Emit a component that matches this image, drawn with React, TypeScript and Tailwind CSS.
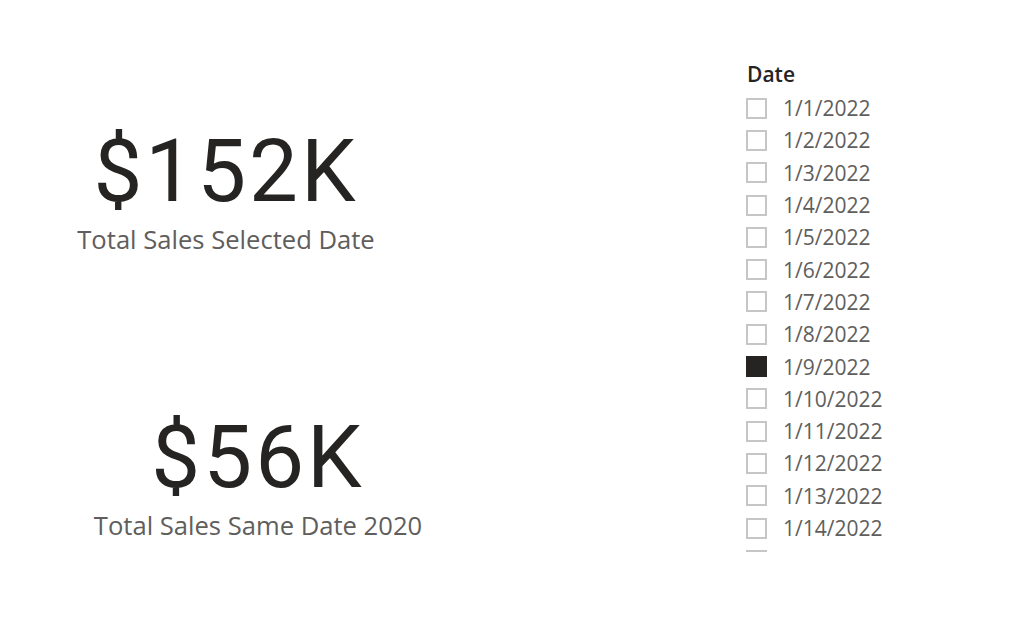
import React from "react";

const dates = Array.from({ length: 15 }, (_, i) => `1/${i + 1}/2022`);

function Card({ value, label, className }: { value: string; label: string; className: string }) {
  return (
    <div className={`flex flex-col items-center ${className}`}>
      <div
        className="text-[87px] leading-[87px] text-[#252423] tracking-[3px]"
        style={{ fontFamily: "Roboto, 'DejaVu Sans', sans-serif" }}
      >
        {value}
      </div>
      <div
        className="mt-[10px] text-[25.6px] leading-[30px] text-[#605e5c]"
        style={{ fontFamily: "'Open Sans', 'Noto Sans', sans-serif" }}
      >
        {label}
      </div>
    </div>
  );
}

export default function App() {
  return (
    <div className="w-[1035px] h-[636px] bg-white flex overflow-hidden">
      <div className="w-[746px] flex flex-col">
        <Card value="$152K" label="Total Sales Selected Date" className="mt-[128px] w-[452px]" />
        <Card value="$56K" label="Total Sales Same Date 2020" className="mt-[159px] ml-[68px] w-[380px]" />
      </div>
      <div className="flex flex-col pt-[60px]" style={{ fontFamily: "'Open Sans', 'Noto Sans', sans-serif" }}>
        <div className="text-[21px] leading-[28px] font-semibold text-[#252423] ml-[1px]">Date</div>
        <div className="mt-[4px] h-[460px] overflow-hidden flex flex-col">
          {dates.map((d, i) => (
            <div key={d} className="flex items-center h-[32.3px] shrink-0">
              <div
                className={`w-[21px] h-[21px] border-2 ${
                  i === 8 ? "bg-[#252423] border-[#252423]" : "border-[#c8c6c4] bg-white"
                }`}
              />
              <span className="ml-[16px] text-[21px] leading-[28px] text-[#605e5c]">{d}</span>
            </div>
          ))}
        </div>
      </div>
    </div>
  );
}
